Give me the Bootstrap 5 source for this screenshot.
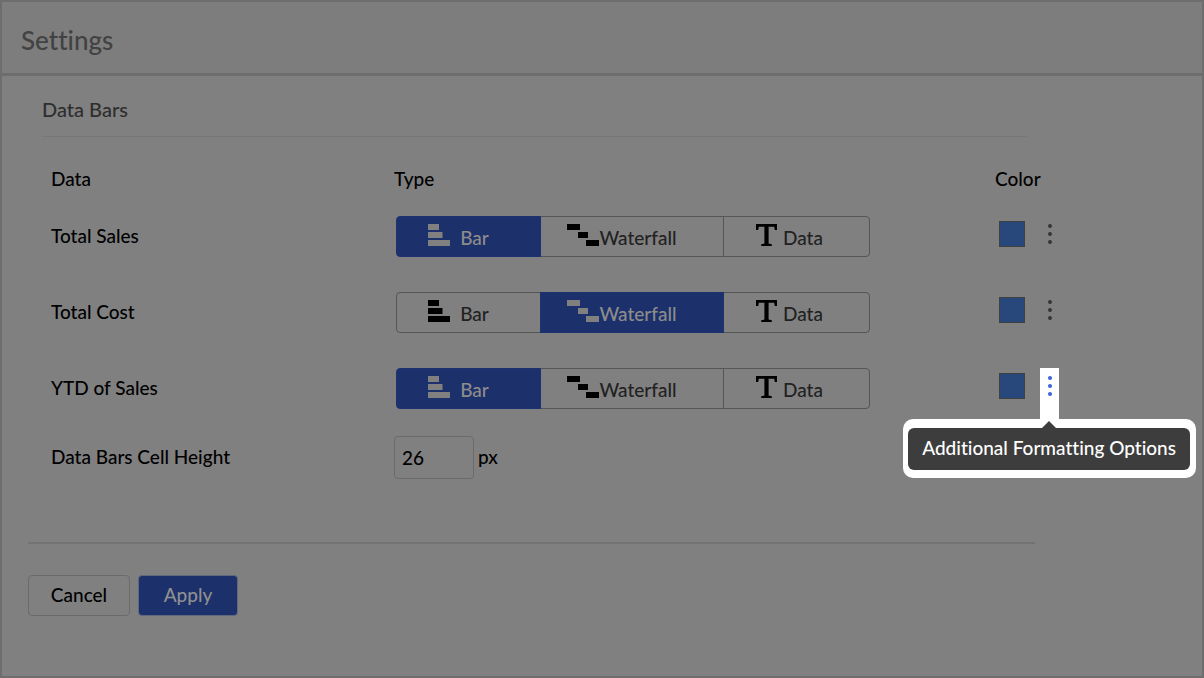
<!DOCTYPE html>
<html lang="en">
<head>
<meta charset="utf-8">
<meta name="viewport" content="width=device-width, initial-scale=1">
<title>Settings</title>
<link href="https://cdn.jsdelivr.net/npm/bootstrap@5.3.0/dist/css/bootstrap.min.css" rel="stylesheet">
<style>
  :root { --page: #808080; --edge: #6d6d6d; --rule: #737373; --accent: #1c306b; --ink: #000; }
  body { font: 500 19px/24px Lato, "Liberation Sans", sans-serif; font-variant-ligatures: none; background: var(--page); color: var(--ink); }
  .settings-page { border: 2px solid var(--edge); }
  .settings-header { background: #7d7d7d; border-bottom: 3px solid var(--edge); padding: 22px 19px 17px; }
  .settings-header h1 { font-size: 26px; line-height: 32px; font-weight: 500; color: #424242; }
  .section-title { font-size: 20px; line-height: 24px; font-weight: 500; color: #2e2e2e; margin: 0 175px 0 40px; padding: 21px 0 15px; border-bottom: 1px solid #777; }
  .data-wrap { margin: 23px 130px 0 40px; }
  .data-table { width: 100%; table-layout: fixed; }
  .data-table th, .data-table td { padding: 0; font-weight: 500; vertical-align: middle; }
  .data-table th:first-child { padding-left: 9px; }
  .data-table tbody tr { height: 76px; }
  .data-table thead tr { height: 38px; }
  .data-table tbody tr:last-child { height: 62px; }
  .col-name { width: 352px; }
  .col-color { width: 77px; }
  .type-group { margin-left: 2px; }
  .type-group .btn { --bs-btn-color: #222; --bs-btn-border-color: #555; --bs-btn-bg: transparent;
    --bs-btn-hover-bg: #787878; --bs-btn-hover-border-color: #555; --bs-btn-hover-color: #222;
    --bs-btn-active-bg: var(--accent); --bs-btn-active-border-color: #1c3273; --bs-btn-active-color: #8c8c8c;
    --bs-btn-border-radius: 4px; --bs-btn-padding-x: 0; --bs-btn-padding-y: 0;
    --bs-btn-font-size: 19px; --bs-btn-font-weight: 500;
    flex: none; height: 41px; line-height: 24px; display: flex; justify-content: center; align-items: center; }
  .type-group .btn span { padding-top: 4px; }
  .type-group svg { color: #000; margin-bottom: 2px; }
  .type-group .btn-check:checked + .btn svg { color: #808080; }
  .opt-bar { width: 145px; gap: 10px; padding-right: 20px; }
  .opt-waterfall { width: 184px; padding-right: 20px; }
  .opt-text { width: 147px; gap: 6px; padding-right: 14px; }
  .color-tools { margin: 0 0 5px 4px; gap: 15px; }
  .swatch { width: 26px; height: 26px; padding: 0; border: 1px solid #414141; background: #28477a; }
  .kebab { width: 19px; height: 31px; padding: 0; border: 0; background: none; color: #353535; display: block; position: relative; z-index: 2; }
  .kebab svg { display: block; margin: auto; }
  .kebab.active { color: #3a63dc; }
  .spot-column { position: absolute; top: -2px; left: 0; width: 19px; height: 52px; background: #fff; }
  .spot-tip { position: absolute; top: 49px; right: -137px; z-index: 3; padding: 9px 6px 8px 5px; border-radius: 10px; background: #fff; }
  .spot-tip .tip-label { background: #3d3d3d; color: #fff; border-radius: 6px; padding: 8px 14px 10px; white-space: nowrap; }
  .spot-tip .tip-arrow { position: absolute; top: 2px; right: 140px; border: 7px solid transparent; border-top: 0; border-bottom-color: #3d3d3d; }
  .height-input { width: 80px; height: 43px; font: inherit; color: var(--ink); background: transparent; border: 1px solid #6b6b6b; border-radius: 4px; padding: 0 7px; }
  .settings-footer { margin: 54px 167px 0 26px; border-top: 2px solid var(--rule); padding: 31px 0 60px; gap: 8px; }
  .settings-footer .btn { height: 41px; padding: 0; font-size: 19px; font-weight: 500; border-radius: 4px; }
  .btn-cancel { width: 102px; color: var(--ink); border-color: #6b6b6b; }
  .btn-apply { width: 100px; background: var(--accent); border-color: #60687c; color: #8f8f8f; }
</style>
</head>
<body>
<svg class="d-none" xmlns="http://www.w3.org/2000/svg">
  <symbol id="i-bar" viewBox="0 0 22 22"><path fill="currentColor" d="M0 0h11v6H0zM0 8h14.500v6H0zM0 16h22v6H0z"/></symbol>
  <symbol id="i-waterfall" viewBox="0 0 32 22"><path fill="currentColor" d="M0 0h13v6H0zM11 8h10v6H11zM19 16h13v6H19z"/></symbol>
  <symbol id="i-text" viewBox="0 0 21 22"><path fill="currentColor" d="M0 0h21v6h-2.200l-.6-3.200H12.600V19.600l3.200.7V22H5.200v-1.700l3.200-.7V2.800H2.800L2.200 6H0z"/></symbol>
  <symbol id="i-dots" viewBox="0 0 4 20"><g fill="currentColor"><circle cx="2" cy="2" r="2"/><circle cx="2" cy="10" r="2"/><circle cx="2" cy="18" r="2"/></g></symbol>
</svg>
<main class="settings-page min-vh-100">
  <header class="settings-header"><h1 class="m-0">Settings</h1></header>
  <form>
    <h2 class="section-title">Data Bars</h2>
    <div class="data-wrap">
      <table class="data-table">
        <colgroup><col class="col-name"><col><col class="col-color"></colgroup>
        <thead><tr><th scope="col">Data</th><th scope="col">Type</th><th scope="col">Color</th></tr></thead>
        <tbody>
          <tr>
            <th scope="row">Total Sales</th>
            <td><div class="btn-group type-group" role="group" aria-label="Total Sales type">
              <input class="btn-check" type="radio" name="sales" id="sales-bar" checked><label class="btn opt-bar" for="sales-bar"><svg width="22" height="22"><use href="#i-bar"/></svg><span>Bar</span></label>
              <input class="btn-check" type="radio" name="sales" id="sales-wf"><label class="btn opt-waterfall" for="sales-wf"><svg width="32" height="22"><use href="#i-waterfall"/></svg><span>Waterfall</span></label>
              <input class="btn-check" type="radio" name="sales" id="sales-text"><label class="btn opt-text" for="sales-text"><svg width="21" height="22"><use href="#i-text"/></svg><span>Data</span></label>
            </div></td>
            <td><div class="color-tools d-flex align-items-center"><button type="button" class="swatch" aria-label="Total Sales color"></button><button type="button" class="kebab" aria-label="Total Sales options"><svg width="4" height="20"><use href="#i-dots"/></svg></button></div></td>
          </tr>
          <tr>
            <th scope="row">Total Cost</th>
            <td><div class="btn-group type-group" role="group" aria-label="Total Cost type">
              <input class="btn-check" type="radio" name="cost" id="cost-bar"><label class="btn opt-bar" for="cost-bar"><svg width="22" height="22"><use href="#i-bar"/></svg><span>Bar</span></label>
              <input class="btn-check" type="radio" name="cost" id="cost-wf" checked><label class="btn opt-waterfall" for="cost-wf"><svg width="32" height="22"><use href="#i-waterfall"/></svg><span>Waterfall</span></label>
              <input class="btn-check" type="radio" name="cost" id="cost-text"><label class="btn opt-text" for="cost-text"><svg width="21" height="22"><use href="#i-text"/></svg><span>Data</span></label>
            </div></td>
            <td><div class="color-tools d-flex align-items-center"><button type="button" class="swatch" aria-label="Total Cost color"></button><button type="button" class="kebab" aria-label="Total Cost options"><svg width="4" height="20"><use href="#i-dots"/></svg></button></div></td>
          </tr>
          <tr>
            <th scope="row">YTD of Sales</th>
            <td><div class="btn-group type-group" role="group" aria-label="YTD of Sales type">
              <input class="btn-check" type="radio" name="ytd" id="ytd-bar" checked><label class="btn opt-bar" for="ytd-bar"><svg width="22" height="22"><use href="#i-bar"/></svg><span>Bar</span></label>
              <input class="btn-check" type="radio" name="ytd" id="ytd-wf"><label class="btn opt-waterfall" for="ytd-wf"><svg width="32" height="22"><use href="#i-waterfall"/></svg><span>Waterfall</span></label>
              <input class="btn-check" type="radio" name="ytd" id="ytd-text"><label class="btn opt-text" for="ytd-text"><svg width="21" height="22"><use href="#i-text"/></svg><span>Data</span></label>
            </div></td>
            <td><div class="color-tools d-flex align-items-center"><button type="button" class="swatch" aria-label="YTD of Sales color"></button>
              <div class="position-relative">
                <div class="spot-column"></div>
                <button type="button" class="kebab active" aria-describedby="format-tip" aria-label="YTD of Sales options"><svg width="4" height="20"><use href="#i-dots"/></svg></button>
                <div class="spot-tip"><div class="tip-arrow"></div><div class="tip-label" id="format-tip" role="tooltip">Additional Formatting Options</div></div>
              </div></div></td>
          </tr>
          <tr>
            <th scope="row"><label for="cell-height">Data Bars Cell Height</label></th>
            <td colspan="2"><div class="d-flex align-items-center gap-1"><input class="height-input" id="cell-height" type="text" inputmode="numeric" value="26"><span>px</span></div></td>
          </tr>
        </tbody>
      </table>
    </div>
    <div class="settings-footer d-flex">
      <button type="button" class="btn btn-cancel">Cancel</button>
      <button type="submit" class="btn btn-apply">Apply</button>
    </div>
  </form>
</main>
<script src="https://cdn.jsdelivr.net/npm/bootstrap@5.3.0/dist/js/bootstrap.bundle.min.js"></script>
</body>
</html>
